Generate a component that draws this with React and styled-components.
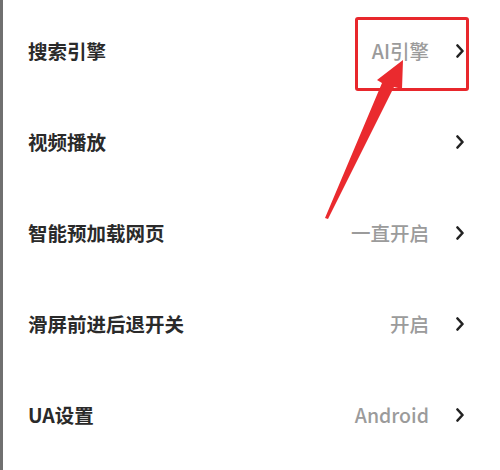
import React from 'react';
import styled, { createGlobalStyle } from 'styled-components';

const GlobalStyle = createGlobalStyle`
    html, body {
        margin: 0;
        padding: 0;
        background: #ffffff;
    }
    body {
        font-family: 'Noto Sans CJK SC', 'Noto Sans', sans-serif;
    }
`;

const Page = styled.div`
    position: relative;
    width: 500px;
    height: 470px;
    box-sizing: border-box;
    border-left: 3px solid #707070;
    padding-top: 5px;
    background: #ffffff;
    overflow: hidden;
`;

const Row = styled.div`
    height: 91px;
    display: flex;
    align-items: center;
    padding: 0 35px 0 25px;
`;

const Title = styled.span`
    flex: 1;
    font-size: 19.5px;
    font-weight: 600;
    color: #2a2a2a;
`;

const Value = styled.span`
    font-size: 19.5px;
    font-weight: 500;
    color: #9b9b9b;
    margin-right: 26px;
`;

const Chevron = styled.svg`
    width: 10px;
    height: 14px;
    flex: none;
`;

// red highlight drawn over the screenshot
const Highlight = styled.div`
    position: absolute;
    left: 352px;
    top: 17px;
    width: 114px;
    height: 74px;
    box-sizing: border-box;
    border: 3px solid #e8272c;
    border-radius: 3px;
`;

const Arrow = styled.svg`
    position: absolute;
    left: 0;
    top: 0;
    width: 500px;
    height: 470px;
    pointer-events: none;
`;

const rows = [
    { title: '搜索引擎', value: 'AI引擎' },
    { title: '视频播放', value: '' },
    { title: '智能预加载网页', value: '一直开启' },
    { title: '滑屏前进后退开关', value: '开启' },
    { title: 'UA设置', value: 'Android' },
];

const App = () => {
    return (
        <>
            <GlobalStyle />
            <Page>
                {rows.map((r) => (
                    <Row key={r.title}>
                        <Title>{r.title}</Title>
                        {r.value && <Value>{r.value}</Value>}
                        <Chevron viewBox="0 0 10 14">
                            <path d="M2.5 1.5 L7.5 7 L2.5 12.5" fill="none" stroke="#222" strokeWidth="2.6" strokeLinecap="round" strokeLinejoin="round" />
                        </Chevron>
                    </Row>
                ))}
                <Highlight />
                <Arrow viewBox="0 0 500 470">
                    <polygon
                        points="400,60 399,89 391,87 325,219 322,218 379,83 374,80"
                        fill="#ea2a2e"
                    />
                </Arrow>
            </Page>
        </>
    );
};

export default App;
